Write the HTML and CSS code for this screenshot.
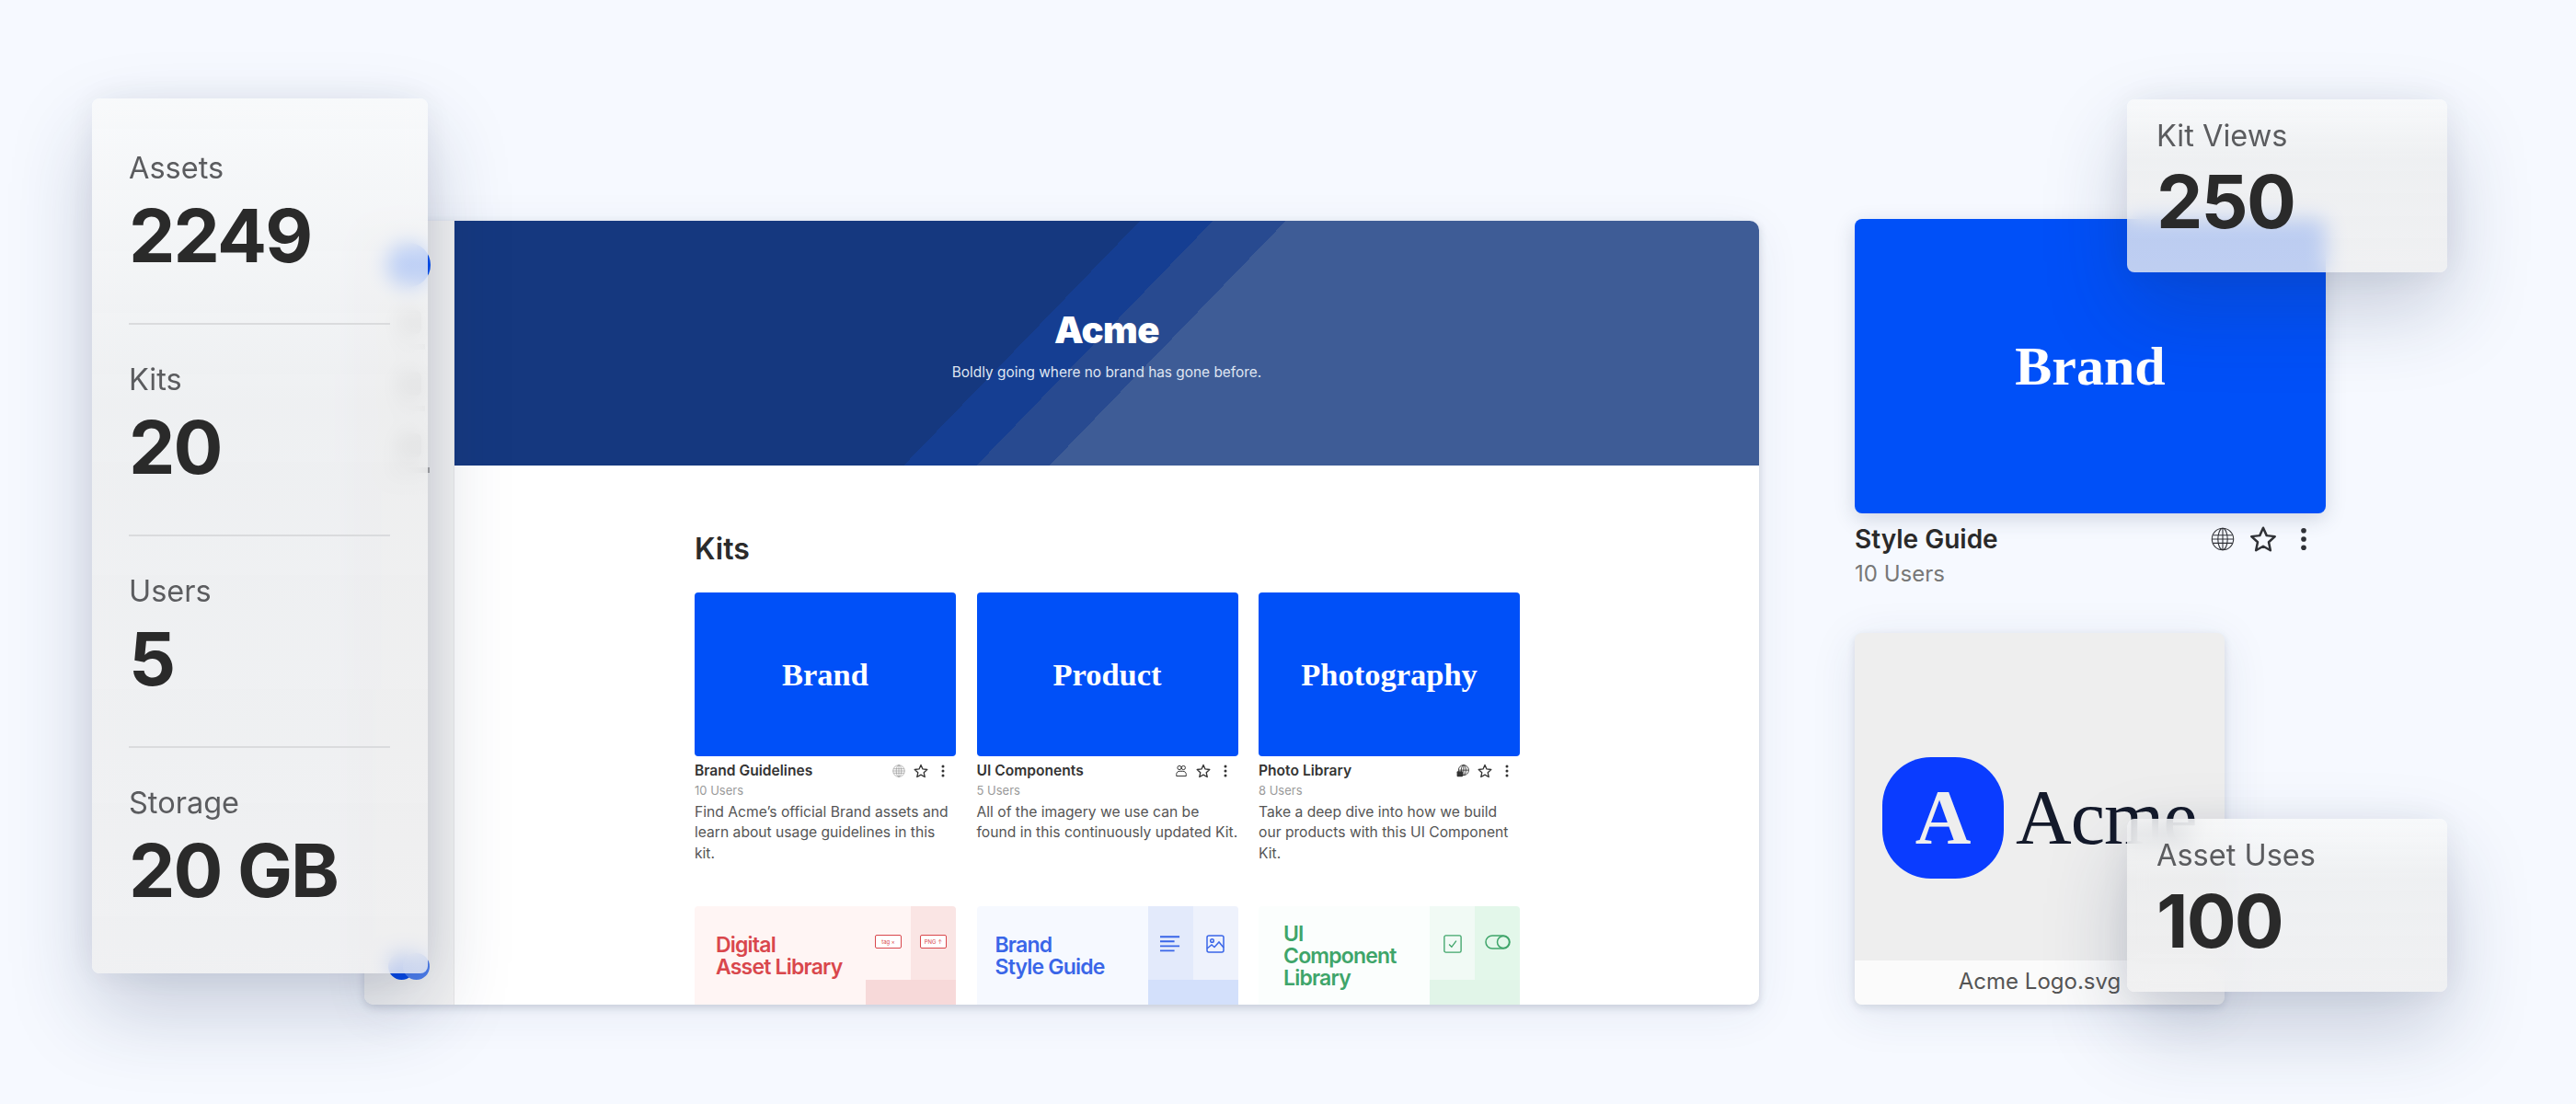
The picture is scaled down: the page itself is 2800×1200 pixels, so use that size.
FILE: index.html
```html
<!DOCTYPE html>
<html lang="en">
<head>
<meta charset="utf-8">
<title>Acme brand portal</title>
<link rel="stylesheet" href="styles.css">
</head>
<body>
<svg class="defs" width="0" height="0" aria-hidden="true">
  <symbol id="i-globe" viewBox="0 0 24 24"><g fill="none" stroke="currentColor" stroke-width="1"><circle cx="12" cy="12" r="10.800"/><ellipse cx="12" cy="12" rx="4.800" ry="10.800"/><path d="M12 1.200v21.600M2.300 8h19.400M2.300 16h19.400M1.200 12h21.600"/></g></symbol>
  <symbol id="i-star" viewBox="0 0 24 24"><path fill="none" stroke="currentColor" stroke-width="2" stroke-linejoin="round" d="M12 2.200l3 6.700 7.200.8-5.400 4.900 1.500 7.200L12 18.200l-6.300 3.600 1.500-7.200-5.400-4.900 7.200-.8z"/></symbol>
  <symbol id="i-dots" viewBox="0 0 24 24"><g fill="currentColor"><circle cx="12" cy="3.500" r="2.600"/><circle cx="12" cy="12" r="2.600"/><circle cx="12" cy="20.500" r="2.600"/></g></symbol>
  <symbol id="i-users" viewBox="0 0 24 24"><g fill="none" stroke="currentColor" stroke-width="1.700"><circle cx="8.500" cy="6" r="3.600"/><circle cx="16" cy="6" r="3.600"/><path d="M3 21.500v-3.500c0-3.200 2.600-5.500 6-5.500h6c3.400 0 6 2.300 6 5.500v3.500z"/></g></symbol>
  <symbol id="i-lock" viewBox="0 0 24 24"><g fill="none" stroke="currentColor" stroke-width="1.500"><circle cx="13.500" cy="10.500" r="9.500"/><ellipse cx="13.500" cy="10.500" rx="4.300" ry="9.500"/><path d="M4 10.500h19M13.500 1v19"/></g><rect x="1" y="12.500" width="11" height="10" rx="1.500" fill="currentColor"/></symbol>
</svg>

<main class="stage">
  <section class="window">
    <nav class="sidebar">
      <span class="side-logo"></span>
      <div class="side-item"><span class="side-icon"></span><span class="side-label"></span></div>
      <div class="side-item"><span class="side-icon"></span><span class="side-label"></span></div>
      <div class="side-item"><span class="side-icon"></span><span class="side-label side-label-long"></span></div>
      <div class="side-avatars"><span class="avatar"></span><span class="avatar avatar-two"></span></div>
    </nav>
    <div class="content">
      <header class="hero">
        <h1 class="hero-title">Acme</h1>
        <p class="hero-sub">Boldly going where no brand has gone before.</p>
      </header>
      <div class="body">
        <h2 class="kits-title">Kits</h2>
        <div class="kit-grid">
          <article class="kit">
            <div class="kit-cover">Brand</div>
            <div class="kit-head">
              <h3 class="kit-name">Brand Guidelines</h3>
              <div class="kit-icons">
                <span class="slot"><svg class="ic muted"><use href="#i-globe"/></svg></span>
                <span class="slot"><svg class="ic star"><use href="#i-star"/></svg></span>
                <span class="slot"><svg class="ic"><use href="#i-dots"/></svg></span>
              </div>
            </div>
            <div class="kit-users">10 Users</div>
            <p class="kit-desc">Find Acme’s official Brand assets and learn about usage guidelines in this kit.</p>
          </article>
          <article class="kit">
            <div class="kit-cover">Product</div>
            <div class="kit-head">
              <h3 class="kit-name">UI Components</h3>
              <div class="kit-icons">
                <span class="slot"><svg class="ic"><use href="#i-users"/></svg></span>
                <span class="slot"><svg class="ic star"><use href="#i-star"/></svg></span>
                <span class="slot"><svg class="ic"><use href="#i-dots"/></svg></span>
              </div>
            </div>
            <div class="kit-users">5 Users</div>
            <p class="kit-desc">All of the imagery we use can be found in this continuously updated Kit.</p>
          </article>
          <article class="kit">
            <div class="kit-cover">Photography</div>
            <div class="kit-head">
              <h3 class="kit-name">Photo Library</h3>
              <div class="kit-icons">
                <span class="slot"><svg class="ic"><use href="#i-lock"/></svg></span>
                <span class="slot"><svg class="ic star"><use href="#i-star"/></svg></span>
                <span class="slot"><svg class="ic"><use href="#i-dots"/></svg></span>
              </div>
            </div>
            <div class="kit-users">8 Users</div>
            <p class="kit-desc">Take a deep dive into how we build our products with this UI Component Kit.</p>
          </article>

          <article class="lib lib-red">
            <div class="lib-text">Digital<br>Asset Library</div>
            <div class="lib-tile tile-a"><span class="chip">tag ×</span></div>
            <div class="lib-tile tile-b"><span class="chip">PNG ↑</span></div>
            <div class="lib-foot"></div>
          </article>
          <article class="lib lib-blue">
            <div class="lib-text">Brand<br>Style Guide</div>
            <div class="lib-tile tile-a">
              <svg class="mini" viewBox="0 0 24 20"><path fill="none" stroke="currentColor" stroke-width="2" d="M0 1.500h23M0 7h17M0 12.500h23M0 18h17"/></svg>
            </div>
            <div class="lib-tile tile-b">
              <svg class="mini" viewBox="0 0 20 20"><g fill="none" stroke="currentColor" stroke-width="1.500"><rect x="1" y="1" width="18" height="18" rx="2"/><circle cx="6.500" cy="6.500" r="1.800"/><path d="M1 15l5-4 3 2.500 5-5.500 5 6"/></g></svg>
            </div>
            <div class="lib-foot"></div>
          </article>
          <article class="lib lib-green">
            <div class="lib-text">UI<br>Component<br>Library</div>
            <div class="lib-tile tile-a">
              <svg class="mini" viewBox="0 0 18 18"><g fill="none" stroke="currentColor" stroke-width="1.200"><rect x=".8" y=".8" width="16.400" height="16.400" rx="1.500"/><path d="M5.500 9.500l2.500 2.500 4.500-6"/></g></svg>
            </div>
            <div class="lib-tile tile-b">
              <svg class="mini mini-wide" viewBox="0 0 28 16"><g fill="none" stroke="currentColor" stroke-width="1.500"><rect x="1" y="1" width="26" height="14" rx="7"/><circle cx="20" cy="8" r="6.500"/></g></svg>
            </div>
            <div class="lib-foot"></div>
          </article>
        </div>
      </div>
    </div>
  </section>

  <aside class="aside">
    <article class="feature">
      <div class="feature-cover">Brand</div>
      <div class="feature-head">
        <h3 class="feature-name">Style Guide</h3>
        <div class="feature-icons">
          <span class="slot-lg"><svg class="ic-lg"><use href="#i-globe"/></svg></span>
          <span class="slot-lg"><svg class="ic-lg star-lg"><use href="#i-star"/></svg></span>
          <span class="slot-lg"><svg class="ic-lg"><use href="#i-dots"/></svg></span>
        </div>
      </div>
      <div class="feature-users">10 Users</div>
    </article>
    <article class="asset">
      <div class="asset-preview">
        <span class="logo-mark">A</span>
        <span class="logo-word">Acme</span>
      </div>
      <div class="asset-caption">Acme Logo.svg</div>
    </article>
  </aside>

  <section class="glass stats">
    <div class="stat"><div class="stat-label">Assets</div><div class="stat-value">2249</div></div>
    <div class="stat"><div class="stat-label">Kits</div><div class="stat-value">20</div></div>
    <div class="stat"><div class="stat-label">Users</div><div class="stat-value">5</div></div>
    <div class="stat"><div class="stat-label">Storage</div><div class="stat-value">20 GB</div></div>
  </section>
  <section class="glass chip-stat chip-views"><div class="stat-label">Kit Views</div><div class="stat-value">250</div></section>
  <section class="glass chip-stat chip-uses"><div class="stat-label">Asset Uses</div><div class="stat-value">100</div></section>
</main>
</body>
</html>
```
FILE: styles.css
```css
* { box-sizing: border-box; }
html, body { margin: 0; padding: 0; }
body { font-family: Inter, "Liberation Sans", sans-serif; background: #f6f9ff; color: #2a2a2a; }
h1, h2, h3, p { margin: 0; }
.defs { position: absolute; }

.stage { position: relative; width: 2800px; height: 1200px; overflow: hidden; display: flex; align-items: flex-start; padding: 238px 0 0 396px; background: #f6f9ff; }

/* main window */
.window { width: 1516px; height: 852px; margin-top: 2px; display: flex; background: #fff; border-radius: 10px; overflow: hidden; box-shadow: 0 3px 10px rgba(40, 55, 85, .2), 0 10px 50px rgba(40, 60, 110, .07); }
.sidebar { width: 98px; flex: none; display: flex; flex-direction: column; align-items: center; background: #f3f3f3; padding: 24px 0 0; border-right: 1px solid #e8e8e8; }
.side-logo { width: 48px; height: 48px; border-radius: 50%; background: #0050f8; flex: none; transform: translateX(-1px); }
.side-item { display: flex; flex-direction: column; align-items: center; gap: 11px; margin-top: 25px; }
.side-item + .side-item { margin-top: 24px; }
.side-icon { width: 26px; height: 26px; border-radius: 6px; background: #b4b4b4; }
.side-label { width: 34px; height: 6px; background: #c4c4c4; }
.side-label-long { width: 44px; background: #a8a8a8; }
.side-avatars { margin-top: auto; margin-bottom: 27px; display: flex; }
.avatar { width: 29px; height: 29px; border-radius: 50%; background: #0046ea; }
.avatar-two { background: #4d7ff0; margin-left: -13px; }

.content { flex: 1; min-width: 0; display: flex; flex-direction: column; }
.hero { height: 266px; flex: none; display: flex; flex-direction: column; align-items: center; justify-content: center; padding-top: 5px; color: #fff; background: linear-gradient(134deg, #15387f 536px, #153e92 536px, #153e92 593px, #284a90 593px, #284a90 650px, #3e5c96 650px); }
.hero-title { font-size: 40px; line-height: 48px; font-weight: 900; letter-spacing: -.5px; }
.hero-sub { font-size: 15.400px; line-height: 24px; margin-top: 10px; color: #dfe5f1; }

.body { padding: 71px 0 0 261px; }
.kits-title { font-size: 32px; line-height: 40px; font-weight: 600; color: #2b2b2b; }
.kit-grid { display: grid; grid-template-columns: repeat(3, 284px); column-gap: 22.500px; margin-top: 27px; }
.kit { height: 341px; }
.kit-cover { height: 178px; background: #0050f8; border-radius: 4px; display: flex; align-items: center; justify-content: center; color: #fff; font: 700 34.500px "Liberation Serif", serif; }
.kit-head { display: flex; align-items: center; justify-content: space-between; margin-top: 6px; height: 20px; padding-right: 2px; }
.kit-name { font-size: 15.600px; line-height: 20px; font-weight: 600; color: #333; }
.kit-icons { display: flex; align-items: center; }
.slot { width: 24px; height: 20px; display: flex; align-items: center; justify-content: center; }
.ic { width: 14px; height: 14px; color: #333; }
.ic.muted { color: #888; }
.ic.star { width: 16px; height: 16px; }
.kit-users { font-size: 13px; line-height: 20px; color: #9a9a9a; margin-top: 1px; }
.kit-desc { font-size: 15.650px; line-height: 22.300px; color: #555; margin-top: 3px; }

/* library cards */
.lib { height: 108px; display: grid; grid-template-columns: 1fr 49px 49px; grid-template-rows: 80px 28px; border-radius: 4px 4px 0 0; overflow: hidden; }
.lib-text { grid-row: 1 / 3; align-self: center; font-size: 23px; line-height: 24px; font-weight: 600; letter-spacing: -.8px; padding-left: 23px; }
.lib-tile { display: flex; align-items: flex-start; justify-content: center; padding-top: 31px; }
.lib-foot { grid-column: 2 / 4; }
.chip { display: block; width: 29px; height: 15px; border: 1px solid currentColor; border-radius: 2px; background: #fff; font-size: 6px; line-height: 13px; text-align: center; white-space: nowrap; }
.mini { width: 22px; height: 20px; }
.mini-wide { width: 28px; height: 16px; }
.lib-red { background: #fff5f4; color: #d9474c; }
.lib-red .tile-b { background: #fae5e4; }
.lib-red .lib-foot { background: #f7d9d9; }
.lib-blue { background: #f6f9ff; color: #3a66e8; }
.lib-blue .tile-a { background: #e3eafb; }
.lib-blue .tile-b { background: #eef2fc; }
.lib-blue .lib-foot { background: #d3e0fb; }
.lib-blue .lib-text { padding-left: 20px; }
.lib-green { background: #fbfefd; color: #3fa56a; }
.lib-green .tile-a { background: #f1faf5; }
.lib-green .tile-b { background: #e3f7ea; }
.lib-green .lib-foot { background: #e1f5e8; }
.lib-green .lib-text { padding-left: 27px; }

/* right column */
.aside { width: 512px; margin-left: 104px; flex: none; }
.feature-cover { height: 320px; border-radius: 8px; background: #0050f8; display: flex; align-items: center; justify-content: center; color: #fff; font: 700 60px "Liberation Serif", serif; box-shadow: 0 6px 22px rgba(40, 55, 90, .18); }
.feature-head { display: flex; align-items: center; justify-content: space-between; margin-top: 11px; height: 34px; padding-right: 2px; }
.feature-name { font-size: 28px; line-height: 34px; font-weight: 600; color: #2a2a2a; }
.feature-icons { display: flex; align-items: center; }
.slot-lg { width: 44px; height: 34px; display: flex; align-items: center; justify-content: center; }
.ic-lg { width: 26px; height: 26px; color: #2f3136; }
.star-lg { width: 30px; height: 30px; }
.feature-users { font-size: 24px; line-height: 30px; color: #777; margin-top: 6px; }

.asset { width: 402px; height: 404px; margin-top: 49px; border-radius: 8px; overflow: hidden; display: flex; flex-direction: column; background: #eee; box-shadow: 0 3px 8px rgba(40, 55, 85, .14), 0 10px 50px rgba(40, 60, 110, .1); }
.asset-preview { flex: 1; display: flex; align-items: center; gap: 13px; padding: 45px 0 0 30px; }
.logo-mark { width: 132px; height: 132px; flex: none; border-radius: 40%; background: #0a3cff; color: #eee; display: flex; align-items: center; justify-content: center; font: 700 84px "Liberation Serif", serif; }
.logo-word { font: 400 84px "Liberation Serif", serif; color: #141a2b; white-space: nowrap; letter-spacing: -1px; }
.asset-caption { height: 48px; flex: none; background: #fbfbfb; text-align: center; font-size: 24px; line-height: 46px; color: #555; }

/* floating glass panels */
.glass { position: absolute; background: linear-gradient(180deg, rgba(248, 249, 250, .8), rgba(236, 237, 238, .78) 35%, rgba(238, 238, 239, .8)); -webkit-backdrop-filter: blur(11px); backdrop-filter: blur(11px); border-radius: 8px; box-shadow: 0 40px 90px rgba(30, 50, 90, .22), 0 0 40px rgba(30, 50, 90, .07); }
.stats { left: 100px; top: 107px; width: 365px; height: 951px; padding: 0 41px 0 40px; display: flex; flex-direction: column; }
.stat { height: 230px; border-bottom: 2px solid #dadbdd; padding-top: 40px; }
.stat:first-child { height: 246px; padding-top: 56px; }
.stat:last-child { border-bottom: 0; }
.stat-label { font-size: 32.500px; line-height: 40px; color: #5b5c5f; }
.stat-value { font-size: 80px; line-height: 90px; font-weight: 700; letter-spacing: -1.800px; color: #2a2a2a; margin-top: 8px; }
.chip-stat { left: 2312px; width: 348px; height: 188px; padding: 20px 32px; }
.chip-stat .stat-value { margin-top: 6px; }
.chip-views { top: 108px; }
.chip-uses { top: 890px; }
```
